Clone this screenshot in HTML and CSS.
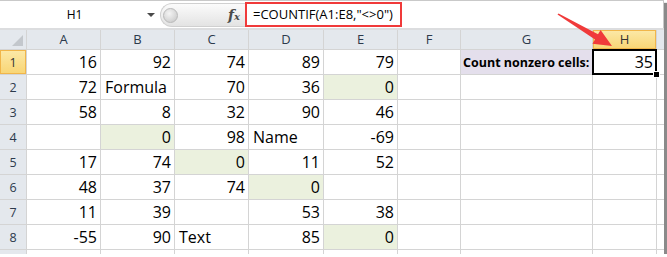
FILE: index.html
```html
<!doctype html>
<html>
  <head>
    <meta charset="utf-8">
    <link rel="stylesheet" href="styles.css">
  </head>
  <body>
    <div class="window">
      <div class="formula-bar">
        <div class="name-box"><span class="name">H1</span><span class="caret"></span></div>
        <div class="func-area"><span class="knob"></span><span class="fx">f<span class="fx-x">x</span></span></div>
        <div class="formula-input"><div class="formula-hl">=COUNTIF(A1:E8,"&lt;&gt;0")</div></div>
      </div>

      <div class="sheet">
        <div class="hdr corner"></div>
        <div class="hdr">A</div>
        <div class="hdr">B</div>
        <div class="hdr">C</div>
        <div class="hdr">D</div>
        <div class="hdr">E</div>
        <div class="hdr">F</div>
        <div class="hdr">G</div>
        <div class="hdr active">H</div>
        <div class="hdr"></div>

        <div class="rh active">1</div>
        <div class="c">16</div><div class="c">92</div><div class="c">74</div><div class="c">89</div><div class="c">79</div>
        <div class="c"></div><div class="c lbl">Count nonzero cells:</div><div class="c sel">35</div><div class="c"></div>

        <div class="rh">2</div>
        <div class="c">72</div><div class="c t">Formula</div><div class="c">70</div><div class="c">36</div><div class="c g">0</div>
        <div class="c"></div><div class="c"></div><div class="c"></div><div class="c"></div>

        <div class="rh">3</div>
        <div class="c">58</div><div class="c">8</div><div class="c">32</div><div class="c">90</div><div class="c">46</div>
        <div class="c"></div><div class="c"></div><div class="c"></div><div class="c"></div>

        <div class="rh">4</div>
        <div class="c"></div><div class="c g">0</div><div class="c">98</div><div class="c t">Name</div><div class="c">-69</div>
        <div class="c"></div><div class="c"></div><div class="c"></div><div class="c"></div>

        <div class="rh">5</div>
        <div class="c">17</div><div class="c">74</div><div class="c g">0</div><div class="c">11</div><div class="c">52</div>
        <div class="c"></div><div class="c"></div><div class="c"></div><div class="c"></div>

        <div class="rh">6</div>
        <div class="c">48</div><div class="c">37</div><div class="c">74</div><div class="c g">0</div><div class="c"></div>
        <div class="c"></div><div class="c"></div><div class="c"></div><div class="c"></div>

        <div class="rh">7</div>
        <div class="c">11</div><div class="c">39</div><div class="c"></div><div class="c">53</div><div class="c">38</div>
        <div class="c"></div><div class="c"></div><div class="c"></div><div class="c"></div>

        <div class="rh">8</div>
        <div class="c">-55</div><div class="c">90</div><div class="c t">Text</div><div class="c">85</div><div class="c g">0</div>
        <div class="c"></div><div class="c"></div><div class="c"></div><div class="c"></div>

        <div class="rh"></div>
        <div class="c"></div><div class="c"></div><div class="c"></div><div class="c"></div><div class="c"></div>
        <div class="c"></div><div class="c"></div><div class="c"></div><div class="c"></div>
      </div>

      <!-- callout arrow pointing at the H column -->
      <svg class="arrow" width="664" height="60" viewBox="0 0 664 60">
        <polygon points="558.5,13.4 598,34.2 600.6,29.9 612,46 592.4,43.7 595,39.4 557.5,14.6" fill="#f03a3a"/>
      </svg>
    </div>
  </body>
</html>
```

FILE: styles.css
```css
body {
  margin: 0;
  background: #fff;
  font-family: "Open Sans", "Noto Sans", sans-serif;
  color: #000;
}
.window {
  position: relative;
  width: 664px;
  height: 254px;
  background: #fff;
  overflow: hidden;
  box-shadow: 3px 3px 1px #8a8a8a;
}

/* formula bar */
.formula-bar {
  display: flex;
  height: 27px;
  border-top: 1px solid #c9c9c9;
  border-bottom: 2px solid #dcdddf;
}
.name-box {
  width: 158px;
  display: flex;
  align-items: center;
  font-size: 12px;
}
.name-box .name {
  flex: 1;
  text-align: center;
  padding-left: 2px;
}
.caret {
  width: 0;
  height: 0;
  margin-right: 3px;
  border-left: 4px solid transparent;
  border-right: 4px solid transparent;
  border-top: 4px solid #4a4a4a;
}
.func-area {
  width: 85px;
  margin: 2px 0 1px 2px;
  display: flex;
  align-items: center;
  justify-content: space-between;
  padding: 0 5px 0 2px;
  box-sizing: border-box;
  border-radius: 12px 0 0 12px;
  background: linear-gradient(#fbfbfb, #e3e3e3);
  border: 1px solid #d0d0d0;
  border-right: 0;
}
.knob {
  width: 13px;
  height: 13px;
  border-radius: 50%;
  background: radial-gradient(circle at 40% 35%, #f4f4f4, #c4c4c4);
  border: 1px solid #b9b9b9;
}
.fx {
  font-family: "DejaVu Serif", serif;
  font-style: italic;
  font-weight: bold;
  font-size: 14px;
  color: #4a4a4a;
}
.fx-x {
  font-size: 10px;
}
.formula-input {
  flex: 1;
  border-right: 1px solid #c9c9c9;
}
.formula-hl {
  display: inline-block;
  margin-top: 1px;
  height: 21px;
  line-height: 21px;
  padding: 0 7px 0 6px;
  border: 2px solid #f03a3a;
  font-size: 13px;
}

/* worksheet grid */
.sheet {
  display: grid;
  grid-template-columns: 26px 73px 73px 73px 74px 73px 62px 131px 63px 8px;
  grid-template-rows: 19px repeat(8, 24px) 4px;
  gap: 1px;
  background: #d4d4d4;
}
.hdr {
  background: #e4e8ed;
  font-size: 13px;
  line-height: 19px;
  text-align: center;
  color: #2c3a4c;
}
.hdr.corner {
  position: relative;
}
.hdr.corner::after {
  content: "";
  position: absolute;
  right: 3px;
  bottom: 3px;
  border-left: 11px solid transparent;
  border-bottom: 11px solid #c3c7cc;
}
.rh {
  background: #e4e8ed;
  font-size: 12.5px;
  line-height: 25px;
  text-align: center;
  color: #2c3a4c;
}
.active {
  background: linear-gradient(#fce9a8, #f8d574);
  box-shadow: inset 0 0 0 1px #f1b64a;
  color: #333;
}
.c {
  background: #fff;
  font-size: 16px;
  line-height: 24px;
  text-align: right;
  padding-right: 3px;
  white-space: nowrap;
}
.c.t {
  text-align: left;
  padding: 0 0 0 4px;
}
.c.g {
  background: #ebf1de;
}
.c.lbl {
  background: #e4dfec;
  font-size: 12.5px;
  font-weight: 700;
  text-align: left;
  padding: 1px 0 0 2px;
}
.c.sel {
  position: relative;
  z-index: 1;
  box-shadow: 0 0 0 1px #000, inset 0 0 0 1px #000;
}
.c.sel::after {
  content: "";
  position: absolute;
  right: -4px;
  bottom: -4px;
  width: 5px;
  height: 5px;
  background: #000;
  border: 1px solid #fff;
}

.arrow {
  position: absolute;
  left: 0;
  top: 0;
  pointer-events: none;
}
```
